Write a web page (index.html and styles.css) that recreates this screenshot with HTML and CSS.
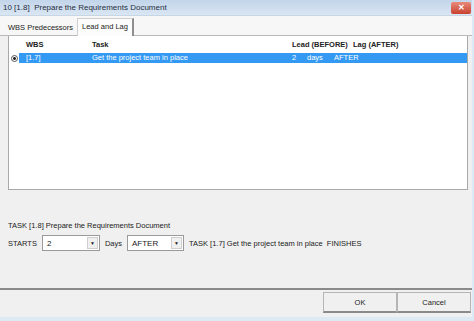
FILE: index.html
```html
<!DOCTYPE html>
<html>
<head>
    <title>Prepare the Requirements Document</title>
    <link rel="stylesheet" href="styles.css">
</head>
<body>
    <div class="window">
        <div class="title-bar">
            <span class="title-text">10 [1.8]&nbsp; Prepare the Requirements Document</span>
            <span class="close-button">&#x2715;</span>
        </div>
        <div class="tab-strip">
            <span class="tab">WBS Predecessors</span>
            <span class="tab active-tab">Lead and Lag</span>
        </div>
        <div class="list-box">
            <div class="list-row list-header">
                <span class="col-radio"></span>
                <span class="col-wbs">WBS</span>
                <span class="col-task">Task</span>
                <span class="col-lead">Lead (BEFORE)</span>
                <span class="col-lag">Lag (AFTER)</span>
            </div>
            <div class="list-row row-data">
                <span class="col-radio"><span class="radio-dot"></span></span>
                <span class="row-selected">
                    <span class="col-wbs">[1.7]</span>
                    <span class="col-task">Get the project team in place</span>
                    <span class="lead-value">2</span>
                    <span class="lead-unit">days</span>
                    <span class="lead-type">AFTER</span>
                </span>
            </div>
        </div>
        <div class="details">
            <p class="task-line">TASK [1.8] Prepare the Requirements Document</p>
            <div class="link-line">
                <span>STARTS</span>
                <span class="combo combo-lead"><span class="combo-value">2</span><span class="combo-arrow">&#9660;</span></span>
                <span>Days</span>
                <span class="combo combo-type"><span class="combo-value">AFTER</span><span class="combo-arrow">&#9660;</span></span>
                <span>TASK [1.7] Get the project team in place&nbsp; FINISHES</span>
            </div>
        </div>
        <div class="button-bar">
            <button class="dialog-button">OK</button>
            <button class="dialog-button">Cancel</button>
        </div>
    </div>
</body>
</html>
```
FILE: styles.css
```css
body {
    margin: 0;
    padding: 0;
    font-family: 'Liberation Sans', Arial, sans-serif;
    font-size: 7.5px;
    color: #222;
    background-color: #dbeaf5;
}

.window {
    width: 472px;
    height: 317px;
    background-color: #f0f0f0;
    display: flex;
    flex-direction: column;
    overflow: hidden;
}

.title-bar {
    height: 15px;
    flex: none;
    display: flex;
    align-items: center;
    justify-content: space-between;
    padding: 0 0 0 3px;
    background: linear-gradient(to bottom, #c3d5ea, #d9e6f3);
    border-bottom: 1px solid #c8d6e4;
}

.title-text {
    font-size: 8px;
    color: #1f2d3d;
}

.close-button {
    width: 20px;
    height: 12px;
    margin-right: 1px;
    border-radius: 2px;
    background: linear-gradient(to bottom, #e88a7a, #c8412e);
    color: #fff;
    font-size: 8px;
    font-weight: bold;
    display: flex;
    align-items: center;
    justify-content: center;
}

.tab-strip {
    display: flex;
    flex: none;
    align-items: flex-end;
    height: 19px;
    padding-left: 4px;
    border-bottom: 1px solid #b9b9b9;
    background-color: #f7f7f7;
}

.tab {
    padding: 0 4px;
    height: 15px;
    line-height: 15px;
    font-size: 7.5px;
    color: #222;
}

.active-tab {
    padding: 0 4px;
    height: 17px;
    line-height: 16px;
    background-color: #fcfcfc;
    border-left: 1px solid #cfcfcf;
    border-right: 2px solid #8e8e8e;
    border-top: 1px solid #cfcfcf;
    margin-bottom: -1px;
}

.list-box {
    flex: none;
    margin: 0 4px 0 8px;
    height: 153px;
    background-color: #fff;
    border: 1px solid #a9a9a9;
    border-top: none;
}

.list-row {
    display: flex;
    align-items: center;
    height: 10px;
    margin-top: 2px;
}

.list-header {
    font-weight: bold;
    height: 12px;
    margin-top: 2px;
    color: #222;
}

.row-data {
    margin-top: 3px;
}

.col-radio {
    width: 10px;
    flex: none;
    display: flex;
    justify-content: center;
}

.radio-dot {
    width: 5px;
    height: 5px;
    border: 1px solid #555;
    border-radius: 50%;
    background: radial-gradient(circle, #222 1.2px, #fff 1.6px);
}

.row-selected {
    flex: 1;
    display: flex;
    height: 10px;
    line-height: 10px;
    background-color: #3399f3;
    color: #fff;
}

.col-wbs {
    width: 66px;
    padding-left: 7px;
    flex: none;
}

.col-task {
    width: 200px;
    flex: none;
}

.col-lead {
    width: 61px;
    flex: none;
    white-space: nowrap;
}

.lead-value {
    width: 15px;
    flex: none;
}

.lead-unit {
    width: 27px;
    flex: none;
}

.details {
    flex: 1;
    padding: 31px 8px 0 8px;
}

.task-line {
    margin: 0 0 5px 0;
}

.link-line {
    display: flex;
    align-items: center;
    gap: 5px;
}

.combo {
    height: 14px;
    display: flex;
    align-items: center;
    justify-content: space-between;
    background-color: #fff;
    border: 1px solid #9a9a9a;
    font-size: 8px;
}

.combo-lead {
    width: 56px;
}

.combo-type {
    width: 55px;
}

.combo-value {
    padding-left: 4px;
}

.combo-arrow {
    width: 9px;
    height: 10px;
    margin-right: 1px;
    font-size: 5px;
    line-height: 10px;
    text-align: center;
    background-color: #f0f0f0;
    border: 1px solid #cfcfcf;
}

.button-bar {
    flex: none;
    height: 25px;
    border-top: 2px solid #8a8a8a;
    display: flex;
    justify-content: flex-end;
    align-items: flex-start;
    padding: 2px 1px 0 0;
}

.dialog-button {
    width: 74px;
    height: 21px;
    margin: 0;
    font-family: 'Liberation Sans', Arial, sans-serif;
    font-size: 7.5px;
    color: #222;
    background-color: #f0f0f0;
    border: 1px solid #b5b5b5;
    border-bottom: 2px solid #8a8a8a;
    border-radius: 0;
}
```
